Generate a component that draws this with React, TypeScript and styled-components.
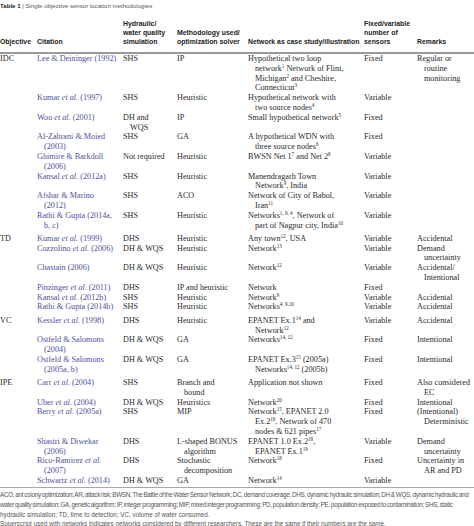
import React, { ReactNode } from 'react';
import styled, { createGlobalStyle } from 'styled-components';

const GlobalStyle = createGlobalStyle`
  html, body {
    margin: 0;
    padding: 0;
    background: #ffffff;
    overflow: hidden;
  }
`;

const COLUMNS = '37px 86px 54px 71px 116px 53px 1fr';

const Page = styled.div`
  width: 474px;
  padding-top: 2px;
  color: #2a2a2a;
`;

const Title = styled.div`
  font-family: 'Liberation Sans', Arial, sans-serif;
  font-size: 6.1px;
  line-height: 8px;
  color: #555;
  white-space: nowrap;
`;

const TitleLabel = styled.span`
  font-weight: bold;
  color: #222;
`;

const HeaderRow = styled.div`
  display: grid;
  grid-template-columns: ${COLUMNS};
  align-items: end;
  margin-top: 8.5px;
  padding-bottom: 6.5px;
  border-bottom: 2px solid #9a9a9a;
  font-family: 'Liberation Sans', Arial, sans-serif;
  font-weight: bold;
  font-size: 6.9px;
  line-height: 9px;
  color: #222;
`;

const HeadCell = styled.div`
  white-space: nowrap;
`;

const Body = styled.div`
  border-bottom: 1px solid #a8a8a8;
  padding-bottom: 1.5px;
`;

const Row = styled.div<{ $group?: boolean }>`
  display: grid;
  grid-template-columns: ${COLUMNS};
  align-items: start;
  padding-top: ${({ $group }) => ($group ? '3.5px' : '0')};
  font-family: 'Liberation Serif', 'Times New Roman', serif;
  font-size: 8.2px;
  line-height: 9.8px;
`;

const Cell = styled.div<{ $cite?: boolean }>`
  white-space: nowrap;
  color: ${({ $cite }) => ($cite ? '#4f4f9e' : '#2a2a2a')};
`;

const Line = styled.div<{ $cont?: boolean }>`
  padding-left: ${({ $cont }) => ($cont ? '7px' : '0')};
`;

const Sup = styled.sup`
  font-size: 0.62em;
  line-height: 0;
  vertical-align: 0.5em;
`;

const Notes = styled.div`
  padding-top: 2px;
  font-family: 'Liberation Sans', Arial, sans-serif;
  font-size: 6.3px;
  line-height: 9.7px;
  color: #555;
  white-space: nowrap;
`;

const NoteLine = styled.div<{ $fit?: boolean }>`
  letter-spacing: ${({ $fit }) => ($fit ? '-0.27px' : '0')};
  word-spacing: ${({ $fit }) => ($fit ? '-0.5px' : '0')};
`;

const EtAl = () => <i>et al.</i>;

type Entry = {
  obj?: string;
  group?: boolean;
  cite: ReactNode[];
  hyd: ReactNode[];
  meth: ReactNode[];
  net: ReactNode[];
  fix: string;
  rem?: ReactNode[];
};

const rows: Entry[] = [
  {
    obj: 'IDC',
    cite: ['Lee & Deininger (1992)'],
    hyd: ['SHS'],
    meth: ['IP'],
    net: [
      'Hypothetical two loop',
      <>network<Sup>1</Sup> Network of Flint,</>,
      <>Michigan<Sup>2</Sup> and Cheshire,</>,
      <>Connecticut<Sup>3</Sup></>,
    ],
    fix: 'Fixed',
    rem: ['Regular or', 'routine', 'monitoring'],
  },
  {
    cite: [<>Kumar <EtAl /> (1997)</>],
    hyd: ['SHS'],
    meth: ['Heuristic'],
    net: ['Hypothetical network with', <>two source nodes<Sup>4</Sup></>],
    fix: 'Variable',
  },
  {
    cite: [<>Woo <EtAl /> (2001)</>],
    hyd: ['DH and', 'WQS'],
    meth: ['IP'],
    net: [<>Small hypothetical network<Sup>5</Sup></>],
    fix: 'Fixed',
  },
  {
    cite: ['Al-Zahrani & Moied', '(2003)'],
    hyd: ['SHS'],
    meth: ['GA'],
    net: ['A hypothetical WDN with', <>three source nodes<Sup>6</Sup></>],
    fix: 'Fixed',
  },
  {
    cite: ['Ghimire & Barkdoll', '(2006)'],
    hyd: ['Not required'],
    meth: ['Heuristic'],
    net: [<>BWSN Net 1<Sup>7</Sup> and Net 2<Sup>8</Sup></>],
    fix: 'Variable',
  },
  {
    cite: [<>Kansal <EtAl /> (2012a)</>],
    hyd: ['SHS'],
    meth: ['Heuristic'],
    net: ['Manendragarh Town', <>Network<Sup>9</Sup>, India</>],
    fix: 'Variable',
  },
  {
    cite: ['Afshar & Marino', '(2012)'],
    hyd: ['SHS'],
    meth: ['ACO'],
    net: ['Network of City of Babol,', <>Iran<Sup>11</Sup></>],
    fix: 'Variable',
  },
  {
    cite: ['Rathi & Gupta (2014a,', 'b, c)'],
    hyd: ['SHS'],
    meth: ['Heuristic'],
    net: [
      <>Networks<Sup>1, 9, 4</Sup>, Network of</>,
      <>part of Nagpur city, India<Sup>10</Sup></>,
    ],
    fix: 'Variable',
  },
  {
    obj: 'TD',
    group: true,
    cite: [<>Kumar <EtAl /> (1999)</>],
    hyd: ['DHS'],
    meth: ['Heuristic'],
    net: [<>Any town<Sup>12</Sup>, USA</>],
    fix: 'Variable',
    rem: ['Accidental'],
  },
  {
    cite: [<>Cozzolino <EtAl /> (2006)</>],
    hyd: ['DH & WQS'],
    meth: ['Heuristic'],
    net: [<>Network<Sup>13</Sup></>],
    fix: 'Variable',
    rem: ['Demand', 'uncertainty'],
  },
  {
    cite: ['Chastain (2006)'],
    hyd: ['DH & WQS'],
    meth: ['Heuristic'],
    net: [<>Network<Sup>12</Sup></>],
    fix: 'Variable',
    rem: ['Accidental/', 'Intentional'],
  },
  {
    cite: [<>Pinzinger <EtAl /> (2011)</>],
    hyd: ['DHS'],
    meth: ['IP and heuristic'],
    net: ['Network'],
    fix: 'Fixed',
  },
  {
    cite: [<>Kansal <EtAl /> (2012b)</>],
    hyd: ['SHS'],
    meth: ['Heuristic'],
    net: [<>Network<Sup>9</Sup></>],
    fix: 'Variable',
    rem: ['Accidental'],
  },
  {
    cite: ['Rathi & Gupta (2014b)'],
    hyd: ['SHS'],
    meth: ['Heuristic'],
    net: [<>Networks<Sup>4, 9,10</Sup></>],
    fix: 'Variable',
    rem: ['Accidental'],
  },
  {
    obj: 'VC',
    group: true,
    cite: [<>Kessler <EtAl /> (1998)</>],
    hyd: ['DHS'],
    meth: ['Heuristic'],
    net: [<>EPANET Ex.1<Sup>14</Sup> and</>, <>Network<Sup>12</Sup></>],
    fix: 'Variable',
    rem: ['Accidental'],
  },
  {
    cite: ['Ostfeld & Salomons', '(2004)'],
    hyd: ['DH & WQS'],
    meth: ['GA'],
    net: [<>Networks<Sup>14, 12</Sup></>],
    fix: 'Fixed',
    rem: ['Intentional'],
  },
  {
    cite: ['Ostfeld & Salomons', '(2005a, b)'],
    hyd: ['DH & WQS'],
    meth: ['GA'],
    net: [
      <>EPANET Ex.3<Sup>15</Sup> (2005a)</>,
      <>Networks<Sup>14, 12</Sup> (2005b)</>,
    ],
    fix: 'Fixed',
    rem: ['Intentional'],
  },
  {
    obj: 'IPE',
    group: true,
    cite: [<>Carr <EtAl /> (2004)</>],
    hyd: ['SHS'],
    meth: ['Branch and', 'bound'],
    net: ['Application not shown'],
    fix: 'Fixed',
    rem: ['Also considered', 'EC'],
  },
  {
    cite: [<>Uber <EtAl /> (2004)</>],
    hyd: ['DH & WQS'],
    meth: ['Heuristics'],
    net: [<>Network<Sup>20</Sup></>],
    fix: 'Fixed',
    rem: ['Intentional'],
  },
  {
    cite: [<>Berry <EtAl /> (2005a)</>],
    hyd: ['SHS'],
    meth: ['MIP'],
    net: [
      <>Network<Sup>15</Sup>, EPANET 2.0</>,
      <>Ex.2<Sup>16</Sup>, Network of 470</>,
      <>nodes &amp; 621 pipes<Sup>17</Sup></>,
    ],
    fix: 'Fixed',
    rem: ['(Intentional)', 'Deterministic'],
  },
  {
    cite: ['Shastri & Diwekar', '(2006)'],
    hyd: ['DHS'],
    meth: ['L-shaped BONUS', 'algorithm'],
    net: [<>EPANET 1.0 Ex.2<Sup>18</Sup>,</>, <>EPANET Ex.1<Sup>19</Sup></>],
    fix: 'Variable',
    rem: ['Demand', 'uncertainty'],
  },
  {
    cite: [<>Rico-Ramirez <EtAl /></>, '(2007)'],
    hyd: ['DHS'],
    meth: ['Stochastic', 'decomposition'],
    net: [<>Network<Sup>18</Sup></>],
    fix: 'Fixed',
    rem: ['Uncertainty in', 'AR and PD'],
  },
  {
    cite: [<>Schwartz <EtAl /> (2014)</>],
    hyd: ['DH & WQS'],
    meth: ['GA'],
    net: [<>Network<Sup>14</Sup></>],
    fix: 'Variable',
  },
];

const headers: string[][] = [
  ['Objective'],
  ['Citation'],
  ['Hydraulic/', 'water quality', 'simulation'],
  ['Methodology used/', 'optimization solver'],
  ['Network as case study/illustration'],
  ['Fixed/variable', 'number of', 'sensors'],
  ['Remarks'],
];

const Lines: React.FC<{ items?: ReactNode[] }> = ({ items = [] }) => (
  <>
    {items.map((item, i) => (
      <Line key={i} $cont={i > 0}>
        {item}
      </Line>
    ))}
  </>
);

export default function App() {
  return (
    <Page>
      <GlobalStyle />
      <Title>
        <TitleLabel>Table 1</TitleLabel> | Single objective sensor location methodologies
      </Title>

      <HeaderRow>
        {headers.map((h, i) => (
          <HeadCell key={i}>
            {h.map((l, j) => (
              <div key={j}>{l}</div>
            ))}
          </HeadCell>
        ))}
      </HeaderRow>

      <Body>
        {rows.map((r, i) => (
          <Row key={i} $group={r.group}>
            <Cell>{r.obj}</Cell>
            <Cell $cite>
              <Lines items={r.cite} />
            </Cell>
            <Cell>
              <Lines items={r.hyd} />
            </Cell>
            <Cell>
              <Lines items={r.meth} />
            </Cell>
            <Cell>
              <Lines items={r.net} />
            </Cell>
            <Cell>{r.fix}</Cell>
            <Cell>
              <Lines items={r.rem} />
            </Cell>
          </Row>
        ))}
      </Body>

      <Notes>
        <NoteLine $fit>
          ACO, ant colony optimization; AR, attack risk; BWSN, The Battle of the Water Sensor Network; DC, demand coverage; DHS, dynamic hydraulic simulation; DH &amp; WQS, dynamic hydraulic and
        </NoteLine>
        <NoteLine $fit>
          water quality simulation; GA, genetic algorithm; IP, integer programming; MIP, mixed integer programming; PD, population density; PE, population exposed to contamination; SHS, static
        </NoteLine>
        <NoteLine>hydraulic simulation; TD, time to detection; VC, volume of water consumed.</NoteLine>
        <NoteLine>
          Superscript used with networks indicates networks considered by different researchers. These are the same if their numbers are the same.
        </NoteLine>
      </Notes>
    </Page>
  );
}
